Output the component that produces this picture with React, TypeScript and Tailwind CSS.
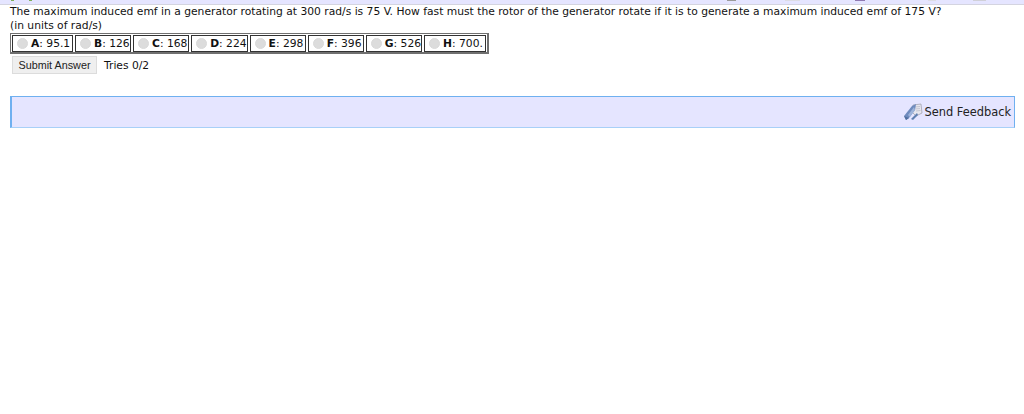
const CHOICES = [
  { letter: "A", value: "95.1" },
  { letter: "B", value: "126" },
  { letter: "C", value: "168" },
  { letter: "D", value: "224" },
  { letter: "E", value: "298" },
  { letter: "F", value: "396" },
  { letter: "G", value: "526" },
  { letter: "H", value: "700." },
];

function FeedbackIcon() {
  return (
    <svg width="20" height="20" viewBox="0 0 20 20" className="shrink-0">
      <path d="M10 3 L18 2 L19 11 L13 14 L9 10 Z" fill="#e6e6ee" stroke="#9a9aa8" strokeWidth="0.7" />
      <path d="M12 5 L17 4.5 M12.5 7 L17 6.5 M13 9 L17.5 8.5" stroke="#b8b8c4" strokeWidth="0.7" />
      <path d="M1 14 L9 4 L13 2 L12 8 L6 16 L3 18 Z" fill="#6f8bbd" />
      <path d="M5 13 L11 5 L12 8 L7 15 Z" fill="#9db3da" />
      <path d="M8 17 L14 11 L15 13 L10 18 Z" fill="#5f7fb0" />
      <path d="M1 14 L3 18 L6 16 Z" fill="#506f9f" />
    </svg>
  );
}

export default function App() {
  return (
    <div className="h-[414px] w-[1024px] overflow-hidden bg-white font-['DejaVu_Sans',sans-serif] text-[10.72px] leading-[14px] text-[#111]">
      <div className="flex h-[5px] border-b border-[#d4d4e0] bg-[#e5e5ff]">
        <span className="ml-[11px] h-[1px] w-[3px] bg-[#7fae5a]" />
        <span className="ml-[15px] h-[1px] w-[3px] bg-[#7fae5a]" />
        <span className="ml-[695px] h-[1px] w-[9px] bg-[#9a9a9a]" />
        <span className="ml-[49px] h-[1px] w-[15px] bg-[#dcdce4]" />
        <span className="ml-[55px] h-[1px] w-[10px] bg-[#8f78b0]" />
        <span className="ml-[63px] h-[1px] w-[8px] bg-[#dcdce4]" />
        <span className="ml-[37px] h-[1px] w-[13px] bg-[#d0d0d8]" />
      </div>
      <div className="px-[10px]">
        <p>The maximum induced emf in a generator rotating at 300 rad/s is 75 V. How fast must the rotor of the generator rotate if it is to generate a maximum induced emf of 175 V?</p>
        <p>(in units of rad/s)</p>
        <div className="flex w-[479px] justify-between border border-r-2 border-b-2 border-[#707070] pt-[1px] pl-[1px] pr-[1px]">
          {CHOICES.map((c) => (
            <label key={c.letter} className="flex h-[17px] flex-1 items-center whitespace-nowrap border border-[#333] pl-[4px] pt-[1px] first:flex-none first:w-[61px] last:flex-none last:w-[62px] not-first:ml-[2px]">
              <span className="mb-[2px] mr-[3px] h-[11px] w-[11px] shrink-0 rounded-full border border-[#dadada] bg-[#dcdcdc]" />
              <b>{c.letter}</b>
              <span>: {c.value}</span>
            </label>
          ))}
        </div>
        <div className="ml-[2px] mt-[2px] flex items-center gap-[7px]">
          <button className="h-[18px] w-[85px] border border-[#dcdcdc] bg-[#efefef] font-['Liberation_Sans',sans-serif] text-[10.8px] text-[#222]">
            Submit Answer
          </button>
          <span className="pt-[1px]">Tries 0/2</span>
        </div>
        <div className="mt-[22px] flex h-[32px] w-[1005px] items-center justify-end gap-[1px] border border-l-2 border-[#6fb0f0] border-b-[#a8d0f8] bg-[#e5e5ff] pb-[1px] pr-[3px] text-[11.4px]">
          <FeedbackIcon />
          <span className="text-[#222]">Send Feedback</span>
        </div>
      </div>
    </div>
  );
}
